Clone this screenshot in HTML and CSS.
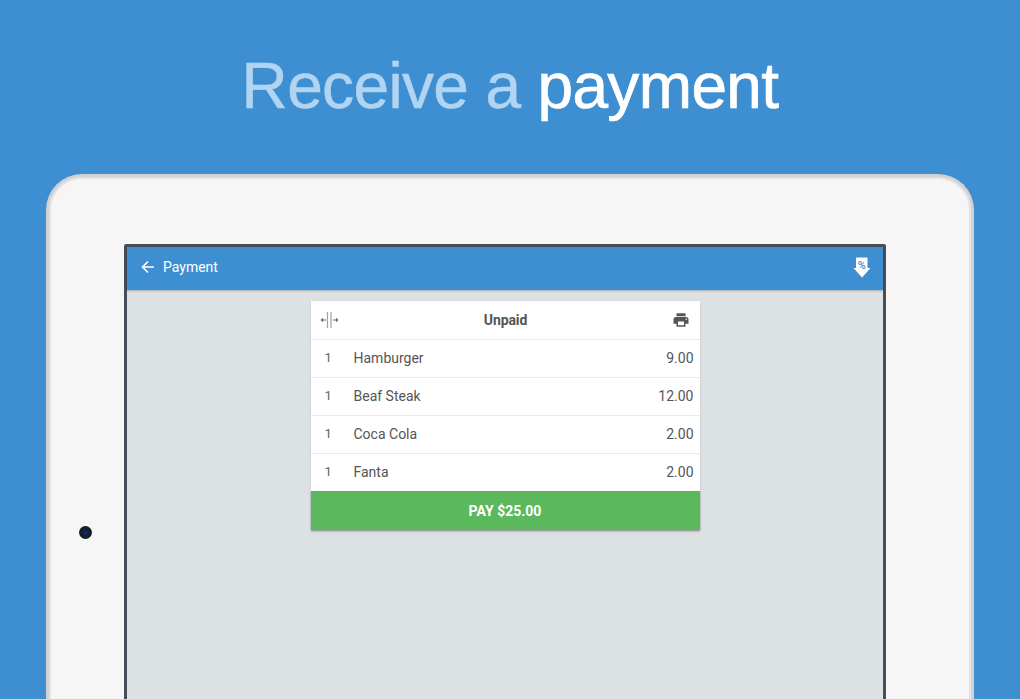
FILE: index.html
```html
<!DOCTYPE html>
<html lang="en">
<head>
    <meta charset="UTF-8">
    <title>Receive a payment</title>
    <link rel="stylesheet" href="styles.css">
</head>
<body>
    <h1 class="headline">Receive a <strong>payment</strong></h1>

    <div class="tablet">
        <div class="camera"></div>
        <div class="screen">
            <header class="toolbar">
                <div class="toolbar-title">
                    <svg class="back-icon" width="16" height="16" viewBox="0 0 16 16">
                        <path d="M14 8H3M8 2.5 2.5 8 8 13.5" fill="none" stroke="#fff" stroke-width="1.6"/>
                    </svg>
                    <span>Payment</span>
                </div>
                <svg class="discount-icon" width="18" height="21" viewBox="0 0 18 21">
                    <path d="M3 0.5H14.5V11H17.5L9 20.5 0.5 11H3Z" fill="#fff"/>
                    <text x="8.8" y="11.5" text-anchor="middle" class="discount-text">%</text>
                </svg>
            </header>

            <div class="content">
                <div class="card">
                    <div class="card-head">
                        <svg width="20" height="18" viewBox="0 0 20 18">
                            <path d="M7.5 1V17M11 1V17" stroke="#a0a0a0" stroke-width="1.2" fill="none"/>
                            <path d="M2 9H6M13 9H17" stroke="#666" stroke-width="1" fill="none"/>
                            <path d="M0.5 9 3 6.8V11.2ZM18.5 9 16 6.8V11.2Z" fill="#666"/>
                        </svg>
                        <span class="card-title">Unpaid</span>
                        <svg width="18" height="18" viewBox="0 0 24 24">
                            <path d="M19 8H5c-1.66 0-3 1.34-3 3v6h4v4h12v-4h4v-6c0-1.66-1.34-3-3-3zm-3 11H8v-5h8v5zm3-7c-.55 0-1-.45-1-1s.45-1 1-1 1 .45 1 1-.45 1-1 1zm-1-9H6v4h12V3z" fill="#555"/>
                        </svg>
                    </div>
                    <div class="row"><span class="qty">1</span><span class="name">Hamburger</span><span class="price">9.00</span></div>
                    <div class="row"><span class="qty">1</span><span class="name">Beaf Steak</span><span class="price">12.00</span></div>
                    <div class="row"><span class="qty">1</span><span class="name">Coca Cola</span><span class="price">2.00</span></div>
                    <div class="row"><span class="qty">1</span><span class="name">Fanta</span><span class="price">2.00</span></div>
                    <button class="pay">PAY $25.00</button>
                </div>
            </div>
        </div>
    </div>
</body>
</html>
```

FILE: styles.css
```css
* {
    margin: 0;
    padding: 0;
    box-sizing: border-box;
}

html, body {
    height: 699px;
    overflow: hidden;
}

body {
    background-color: #3e8fd1;
    font-family: Roboto, sans-serif;
}

.headline {
    height: 174px;
    padding-top: 48px;
    text-align: center;
    font-family: "Liberation Sans", Arial, sans-serif;
    font-size: 64px;
    line-height: 76px;
    font-weight: 400;
    letter-spacing: -0.65px;
    color: #b0d4f1;
    -webkit-text-stroke: 0.5px #b0d4f1;
}

.headline strong {
    font-weight: 400;
    color: #fff;
    -webkit-text-stroke: 0.7px #fff;
}

.tablet {
    position: relative;
    height: 540px;
    margin: 0 46px;
    padding: 67px 85px 0 75px;
    background-color: #f6f6f6;
    border: 3px solid #d2d2d2;
    border-bottom: none;
    border-radius: 36px 36px 0 0;
    box-shadow: inset 0 0 0 2px #e4e4e4;
}

.camera {
    position: absolute;
    left: 30px;
    top: 349px;
    width: 13px;
    height: 13px;
    border-radius: 50%;
    background: radial-gradient(circle, #14248c 0%, #10202e 40%, #14181c 75%, #33373b 100%);
}

.screen {
    height: 470px;
    border: 3px solid #464e57;
    border-bottom: none;
    border-radius: 3px 3px 0 0;
    background-color: #dce1e4;
}

.toolbar {
    display: flex;
    justify-content: space-between;
    align-items: center;
    height: 43px;
    padding: 0 12px 3px 13px;
    background-color: #3e8fd1;
    box-shadow: 0 1px 2px rgba(0, 0, 0, 0.25);
    color: #fff;
}

.toolbar-title {
    display: flex;
    align-items: center;
    gap: 7px;
    font-size: 14px;
    font-weight: 400;
}

.discount-text {
    font-family: Roboto, sans-serif;
    font-size: 11px;
    font-weight: 500;
    fill: #3e8fd1;
}

.content {
    display: flex;
    justify-content: center;
    padding-top: 11px;
}

.card {
    width: 389px;
    background-color: #fff;
    box-shadow: 0 1px 2px rgba(0, 0, 0, 0.15);
}

.card-head {
    display: flex;
    justify-content: space-between;
    align-items: center;
    height: 38px;
    padding: 0 10px 0 9px;
}

.card-title {
    font-size: 14px;
    font-weight: 700;
    letter-spacing: -0.1px;
    color: #555;
}

.row {
    display: flex;
    align-items: center;
    height: 38px;
    padding: 0 6px 2px 14px;
    border-top: 1px solid #e8eaeb;
    font-size: 14px;
    color: #555;
}

.qty {
    width: 29px;
    font-size: 13px;
    color: #666;
}

.name {
    flex: 1;
}

.pay {
    display: block;
    width: 100%;
    height: 39px;
    background-color: #5cb85c;
    border: none;
    box-shadow: 0 1px 2px rgba(0, 0, 0, 0.3);
    color: #fff;
    font-family: Roboto, sans-serif;
    font-size: 14px;
    font-weight: 700;
}
```
